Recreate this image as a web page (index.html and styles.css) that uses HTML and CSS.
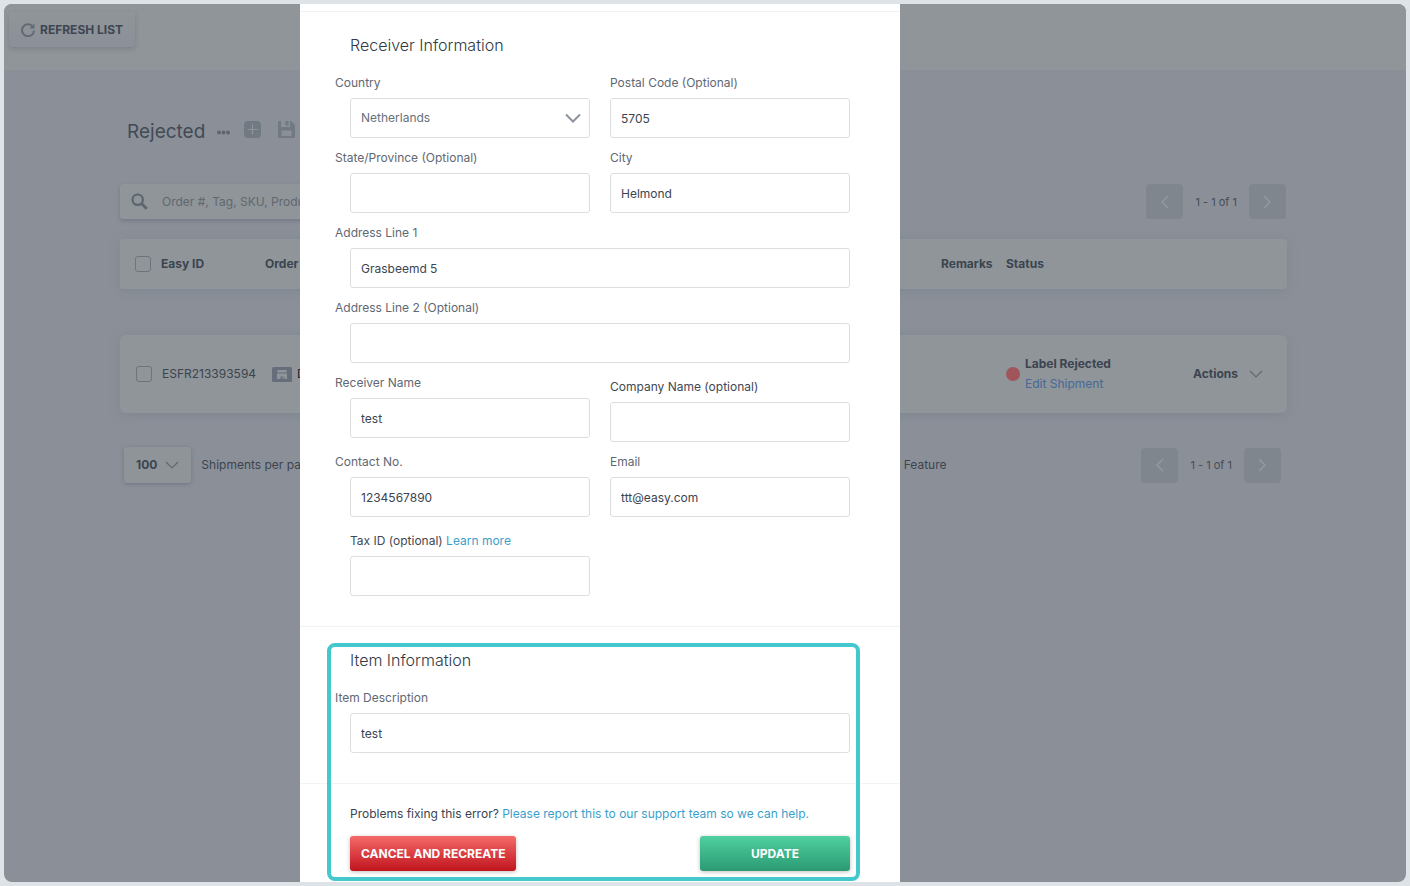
FILE: index.html
```
<!DOCTYPE html>
<html lang="en">
<head>
  <meta charset="UTF-8" />
  <meta name="viewport" content="width=device-width, initial-scale=1.0"/>
  <title>Rejected Shipments</title>
  <link rel="stylesheet" href="styles.css">
</head>
<body>
  <div class="app">
    <header class="topbar">
      <button class="refresh-btn" type="button">
        <svg width="14" height="14" viewBox="0 0 14 14" fill="none" stroke="currentColor" stroke-width="2">
          <path d="M11.6 3.4A6 6 0 1 0 13 7.6"/>
          <path d="M13.5 0.5V5.6H8.4Z" fill="currentColor" stroke="none"/>
        </svg>
        REFRESH LIST
      </button>
    </header>

    <main class="content">
      <div class="title-row">
        <h1>Rejected</h1>
        <button class="icon-btn dots" type="button" aria-label="More">
          <svg width="13" height="5" viewBox="0 0 13 5" fill="currentColor">
            <circle cx="2" cy="2.5" r="1.9"/><circle cx="6.5" cy="2.5" r="1.9"/><circle cx="11" cy="2.5" r="1.9"/>
          </svg>
        </button>
        <button class="icon-btn add" type="button" aria-label="Add">
          <svg width="17" height="17" viewBox="0 0 17 17">
            <rect width="17" height="17" rx="4" fill="currentColor"/>
            <path d="M8.5 3.5v10M3.5 8.5h10" stroke="#8f959a" stroke-width="1.2"/>
          </svg>
        </button>
        <button class="icon-btn save" type="button" aria-label="Save">
          <svg width="17" height="17" viewBox="0 0 17 17" fill="currentColor" fill-rule="evenodd">
            <path d="M1.5 0H3V6H12V0H13L17 4V15.5A1.5 1.5 0 0 1 15.5 17H1.5A1.5 1.5 0 0 1 0 15.5V1.5A1.5 1.5 0 0 1 1.5 0ZM3.5 9.5V15H13.5V9.5Z"/>
            <path d="M7.5 0h3v4.5h-3z"/>
          </svg>
        </button>
      </div>

      <div class="tools">
        <label class="search">
          <svg width="17" height="17" viewBox="0 0 17 17" fill="none" stroke="currentColor">
            <circle cx="6.7" cy="6.7" r="5.2" stroke-width="2.2"/>
            <path d="M10.7 10.7L15.8 15.8" stroke-width="2.8"/>
          </svg>
          <input type="text" placeholder="Order #, Tag, SKU, Product" aria-label="Search">
        </label>
        <div class="pager">
          <button class="page-btn" type="button" aria-label="Previous">
            <svg width="9" height="14" viewBox="0 0 9 14"><path d="M8 1L2 7l6 6"/></svg>
          </button>
          <span>1 - 1 of 1</span>
          <button class="page-btn" type="button" aria-label="Next">
            <svg width="9" height="14" viewBox="0 0 9 14"><path d="M1 1l6 6-6 6"/></svg>
          </button>
        </div>
      </div>

      <table class="shipments">
        <thead>
          <tr>
            <th><input type="checkbox" aria-label="Select all"></th>
            <th>Easy ID</th>
            <th>Order</th>
            <th>Remarks</th>
            <th>Status</th>
            <th></th>
          </tr>
        </thead>
        <tbody>
          <tr>
            <td><input type="checkbox" aria-label="Select shipment"></td>
            <td>ESFR213393594</td>
            <td class="order">
              <svg width="20" height="15" viewBox="0 0 20 15">
                <rect width="20" height="15" rx="1.5" fill="#656e7a"/>
                <path d="M5.5 3h9v2.5h-9zM5 6.5h10V12h-2.500V9.500h-1V12h-1V9.500h-2V12H5z" fill="#8f9598"/>
              </svg>
              <span>D</span>
            </td>
            <td></td>
            <td class="status">
              <i class="dot"></i>
              <div>
                <strong>Label Rejected</strong>
                <a href="#edit">Edit Shipment</a>
              </div>
            </td>
            <td>
              <button class="actions-btn" type="button">Actions
                <svg width="14" height="8" viewBox="0 0 14 8"><path d="M1 1l6 6 6-6"/></svg>
              </button>
            </td>
          </tr>
        </tbody>
      </table>

      <div class="list-footer">
        <button class="size-btn" type="button">100
          <svg width="14" height="8" viewBox="0 0 14 8"><path d="M1 1l6 6 6-6"/></svg>
        </button>
        <span>Shipments per page</span>
        <span class="feature">Feature</span>
        <div class="pager">
          <button class="page-btn" type="button" aria-label="Previous">
            <svg width="9" height="14" viewBox="0 0 9 14"><path d="M8 1L2 7l6 6"/></svg>
          </button>
          <span>1 - 1 of 1</span>
          <button class="page-btn" type="button" aria-label="Next">
            <svg width="9" height="14" viewBox="0 0 9 14"><path d="M1 1l6 6-6 6"/></svg>
          </button>
        </div>
      </div>
    </main>

    <div class="backdrop">
      <form class="modal">
        <section class="section">
          <h2>Receiver Information</h2>
          <div class="fields">
            <div class="field">
              <label class="outdent" for="country">Country</label>
              <div class="select-wrap">
                <select id="country"><option>Netherlands</option></select>
                <svg width="16" height="10" viewBox="0 0 16 10"><path d="M1 1.5l7 7 7-7"/></svg>
              </div>
            </div>
            <div class="field">
              <label for="postal">Postal Code (Optional)</label>
              <input id="postal" type="text" value="5705">
            </div>
            <div class="field">
              <label class="outdent" for="state">State/Province (Optional)</label>
              <input id="state" type="text">
            </div>
            <div class="field">
              <label for="city">City</label>
              <input id="city" type="text" value="Helmond">
            </div>
            <div class="field wide">
              <label class="outdent" for="address1">Address Line 1</label>
              <input id="address1" type="text" value="Grasbeemd 5">
            </div>
            <div class="field wide">
              <label class="outdent" for="address2">Address Line 2 (Optional)</label>
              <input id="address2" type="text">
            </div>
            <div class="field">
              <label class="outdent" for="name">Receiver Name</label>
              <input id="name" type="text" value="test">
            </div>
            <div class="field extra">
              <label for="company">Company Name (optional)</label>
              <input id="company" type="text">
            </div>
            <div class="field">
              <label class="outdent" for="contact">Contact No.</label>
              <input id="contact" type="text" value="1234567890">
            </div>
            <div class="field">
              <label for="email">Email</label>
              <input id="email" type="text" value="ttt@easy.com">
            </div>
            <div class="field extra">
              <label for="tax">Tax ID (optional) <a href="#tax">Learn more</a></label>
              <input id="tax" type="text">
            </div>
          </div>
        </section>

        <div class="highlighted">
          <section class="section">
            <h2>Item Information</h2>
            <div class="fields">
              <div class="field wide">
                <label class="outdent" for="item">Item Description</label>
                <input id="item" type="text" value="test">
              </div>
            </div>
          </section>
          <footer class="modal-footer">
            <p>Problems fixing this error? <a href="#support">Please report this to our support team so we can help.</a></p>
            <div class="button-row">
              <button class="btn btn-red" type="button">CANCEL AND RECREATE</button>
              <button class="btn btn-green" type="button">UPDATE</button>
            </div>
          </footer>
        </div>
      </form>
    </div>
  </div>
</body>
</html>
```
FILE: styles.css
```
* {
  box-sizing: border-box;
}

body {
  margin: 0;
  padding: 4px;
  background: #dde3e7;
  font-family: Inter, "Liberation Sans", sans-serif;
  font-size: 12px;
  line-height: 20px;
  color: #3b4450;
}

button,
input,
select {
  font: inherit;
  color: inherit;
}

button {
  padding: 0;
  border: none;
  background: none;
  cursor: pointer;
}

svg {
  display: block;
  flex: none;
}

a {
  color: #3a9fcb;
  text-decoration: none;
}

.app {
  position: relative;
  min-height: calc(100vh - 8px);
  border-radius: 8px;
  overflow: hidden;
  background: #8b9098;
}

/* page behind the dialog */
.topbar {
  height: 66px;
  padding: 8px 5px;
  background: #8f9598;
}

.refresh-btn {
  display: flex;
  align-items: center;
  gap: 5px;
  height: 35px;
  padding: 0 12px;
  border-radius: 4px;
  background: linear-gradient(#8f9598, #8b9099);
  box-shadow: 0 2px 4px rgba(60, 70, 90, 0.25);
  font-weight: 700;
  color: #3e4652;
}

.refresh-btn svg {
  color: #626a73;
}

.content {
  padding: 47px 119px 0 116px;
}

.title-row {
  display: flex;
  align-items: center;
  height: 30px;
  padding-left: 7px;
}

h1 {
  margin: 0;
  font-size: 19px;
  font-weight: 400;
  color: #424a55;
}

.icon-btn {
  color: #717982;
}

.dots {
  margin-left: 12px;
  color: #5e666f;
}

.add {
  margin: 0 17px 6px 14px;
}

.save {
  margin-bottom: 6px;
}

.tools {
  display: flex;
  justify-content: space-between;
  margin-top: 37px;
}

.search {
  display: flex;
  align-items: center;
  gap: 14px;
  width: 400px;
  height: 35px;
  padding: 0 11px;
  border-radius: 3px;
  background: #8f9598;
  box-shadow: 0 2px 4px rgba(60, 70, 90, 0.3);
  color: #5c656e;
}

.search input {
  flex: 1;
  padding: 0;
  border: none;
  outline: none;
  background: none;
}

.search input::placeholder {
  color: #5f6871;
}

.pager {
  display: flex;
  align-items: center;
  gap: 12px;
  padding-right: 1px;
  font-size: 11px;
  color: #454d57;
}

.page-btn {
  display: flex;
  align-items: center;
  justify-content: center;
  width: 37px;
  height: 35px;
  border-radius: 4px;
  background: #7f868e;
}

.page-btn path {
  fill: none;
  stroke: #939a9f;
  stroke-width: 1.5;
}

.shipments,
.shipments thead,
.shipments tbody {
  display: block;
}

.shipments {
  margin-top: 20px;
}

.shipments tr {
  display: grid;
  grid-template-columns: 26px 104px 1fr 65px 187px 94px;
  align-items: center;
  padding-left: 15px;
  background: #8f9598;
  box-shadow: 0 2px 12px rgba(80, 95, 120, 0.2);
}

.shipments th,
.shipments td {
  padding: 0;
  text-align: left;
}

.shipments th {
  font-weight: 700;
}

.shipments thead tr {
  height: 50px;
  border-radius: 3px;
}

.shipments tbody tr {
  height: 78px;
  margin-top: 46px;
  padding-left: 16px;
  border-radius: 6px;
}

.shipments input {
  display: block;
  appearance: none;
  width: 16px;
  height: 16px;
  margin: 0;
  border: 1px solid #6c757f;
  border-radius: 3px;
}

.shipments .order {
  display: flex;
  align-items: center;
  gap: 5px;
  padding-left: 6px;
  color: #1d232b;
}

.status {
  display: flex;
  align-items: center;
  gap: 5px;
}

.dot {
  width: 14px;
  height: 14px;
  border-radius: 50%;
  background: #a0555b;
}

.status strong,
.status a {
  display: block;
  font-weight: 700;
}

.status a {
  font-weight: 400;
  color: #46699a;
}

.actions-btn,
.size-btn {
  display: flex;
  align-items: center;
  gap: 11px;
  font-weight: 700;
}

.actions-btn path,
.size-btn path {
  fill: none;
  stroke: #606872;
  stroke-width: 1.2;
}

.list-footer {
  display: flex;
  align-items: center;
  margin-top: 34px;
  padding: 0 5px 0 4px;
}

.size-btn {
  gap: 8px;
  height: 36px;
  margin-right: 10px;
  padding: 0 12px;
  border-radius: 3px;
  background: #8f9499;
  box-shadow: 0 1px 4px rgba(60, 70, 90, 0.35);
}

.feature {
  margin: 0 195px 0 auto;
}

/* edit dialog */
.backdrop {
  position: absolute;
  inset: 0;
  display: flex;
  justify-content: center;
  padding-right: 210px;
}

.modal {
  width: 600px;
  padding-top: 7px;
  background: #fff;
}

.section,
.modal-footer {
  padding: 18px 50px 25px;
  border-top: 1px solid #f1f3f4;
}

h2 {
  margin: 0 0 8px;
  font-size: 16px;
  line-height: 30px;
  font-weight: 300;
  color: #303945;
}

.fields {
  display: grid;
  grid-template-columns: 1fr 1fr;
  column-gap: 20px;
}

.field {
  padding-bottom: 5px;
}

.wide {
  grid-column: span 2;
}

.extra {
  padding-top: 4px;
}

.field label {
  display: block;
  line-height: 30px;
  color: #5f6872;
}

.extra label {
  color: #3f4853;
}

.field .outdent {
  margin-left: -15px;
}

.field input,
.field select {
  display: block;
  width: 100%;
  height: 40px;
  padding: 0 10px;
  border: 1px solid #dcdfe1;
  border-radius: 3px;
  outline: none;
  background: #fff;
}

.field select {
  appearance: none;
  color: #66707a;
}

.select-wrap {
  position: relative;
}

.select-wrap svg {
  position: absolute;
  right: 9px;
  top: 15px;
  fill: none;
  stroke: #8b949c;
  stroke-width: 2;
  pointer-events: none;
}

.highlighted {
  position: relative;
}

.highlighted::after {
  content: "";
  position: absolute;
  inset: 17px 40px 1px 27px;
  border: 4px solid #45c8cd;
  border-radius: 8px;
  pointer-events: none;
}

.modal-footer {
  padding: 20px 50px 11px;
}

.modal-footer p {
  margin: 0 0 12px;
}

.button-row {
  display: flex;
  justify-content: space-between;
}

.btn {
  height: 35px;
  border-radius: 3px;
  box-shadow: 0 1px 4px rgba(0, 0, 0, 0.25);
  font-weight: 700;
  color: #fff;
}

.btn-red {
  padding: 0 11px;
  background: linear-gradient(#f56a6a, #c0141d);
}

.btn-green {
  width: 150px;
  background: linear-gradient(#4fd09f, #2b9a73);
}
```
